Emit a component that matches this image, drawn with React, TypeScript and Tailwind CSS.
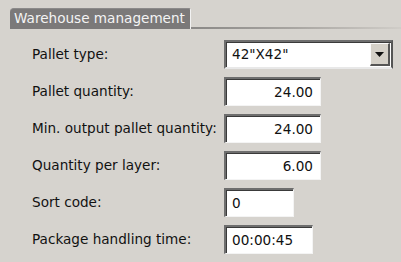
import React from "react";

const font = { fontFamily: '"DejaVu Sans", Tahoma, Verdana, sans-serif' };

function Field({ value, w, align }: { value: string; w: string; align: "left" | "right" }) {
  return (
    <div
      className={`${w} h-[29px] bg-white border-t-2 border-l-2 border-t-[#6e6e6e] border-l-[#6e6e6e] border-b border-r border-b-[#f4f4f4] border-r-[#f4f4f4] shadow-[inset_1px_1px_0_#3a3a3a] flex items-center text-[13.6px] text-[#111] ${
        align === "right" ? "justify-end pr-[7px]" : "justify-start pl-[6px]"
      }`}
    >
      {value}
    </div>
  );
}

export default function App() {
  const rows: { label: string; node: React.ReactNode }[] = [
    {
      label: "Pallet type:",
      node: (
        <div className="w-[169px] h-[29px] bg-white border-2 border-t-[#6e6e6e] border-l-[#6e6e6e] border-r-[#555] border-b-[#e8e8e8] shadow-[inset_1px_1px_0_#3a3a3a] flex items-center">
          <span className="flex-1 pl-[6px] text-[13.6px] text-[#111]">42"X42"</span>
          <div className="w-[20px] h-[23px] mr-[1px] bg-[#d4d0c8] border-t border-l border-t-[#fafafa] border-l-[#fafafa] border-b-2 border-r-2 border-b-[#555] border-r-[#555] flex items-center justify-center">
            <svg width="9" height="5" viewBox="0 0 9 5">
              <polygon points="0,0 9,0 4.5,5" fill="#111" />
            </svg>
          </div>
        </div>
      ),
    },
    { label: "Pallet quantity:", node: <Field value="24.00" w="w-[97px]" align="right" /> },
    { label: "Min. output pallet quantity:", node: <Field value="24.00" w="w-[97px]" align="right" /> },
    { label: "Quantity per layer:", node: <Field value="6.00" w="w-[97px]" align="right" /> },
    { label: "Sort code:", node: <Field value="0" w="w-[70px]" align="left" /> },
    { label: "Package handling time:", node: <Field value="00:00:45" w="w-[89px]" align="left" /> },
  ];

  return (
    <div className="w-[401px] h-[262px] bg-[#d6d3ce] overflow-hidden" style={font}>
      <div className="flex items-end pt-[8px]">
        <div className="ml-[10px] h-[21px] w-[181px] bg-[#7b7979] rounded-tl-[4px] rounded-tr-[2px] border-r border-r-[#f2f2f2] border-t border-t-[#8c8a8a] flex items-center pl-[4px] text-[13.6px] text-[#f4f4f4] leading-none">
          Warehouse management
        </div>
        <div className="flex-1 h-[2px] bg-gradient-to-r from-[#8a8886] via-[#a9a6a2] to-[#d0cdc8]" />
      </div>
      <div className="mt-[11px] pl-[32px] grid grid-cols-[192px_auto] gap-y-[8px] items-center">
        {rows.map((r) => (
          <React.Fragment key={r.label}>
            <div className="text-[13.6px] text-[#111] whitespace-nowrap">{r.label}</div>
            <div>{r.node}</div>
          </React.Fragment>
        ))}
      </div>
    </div>
  );
}
